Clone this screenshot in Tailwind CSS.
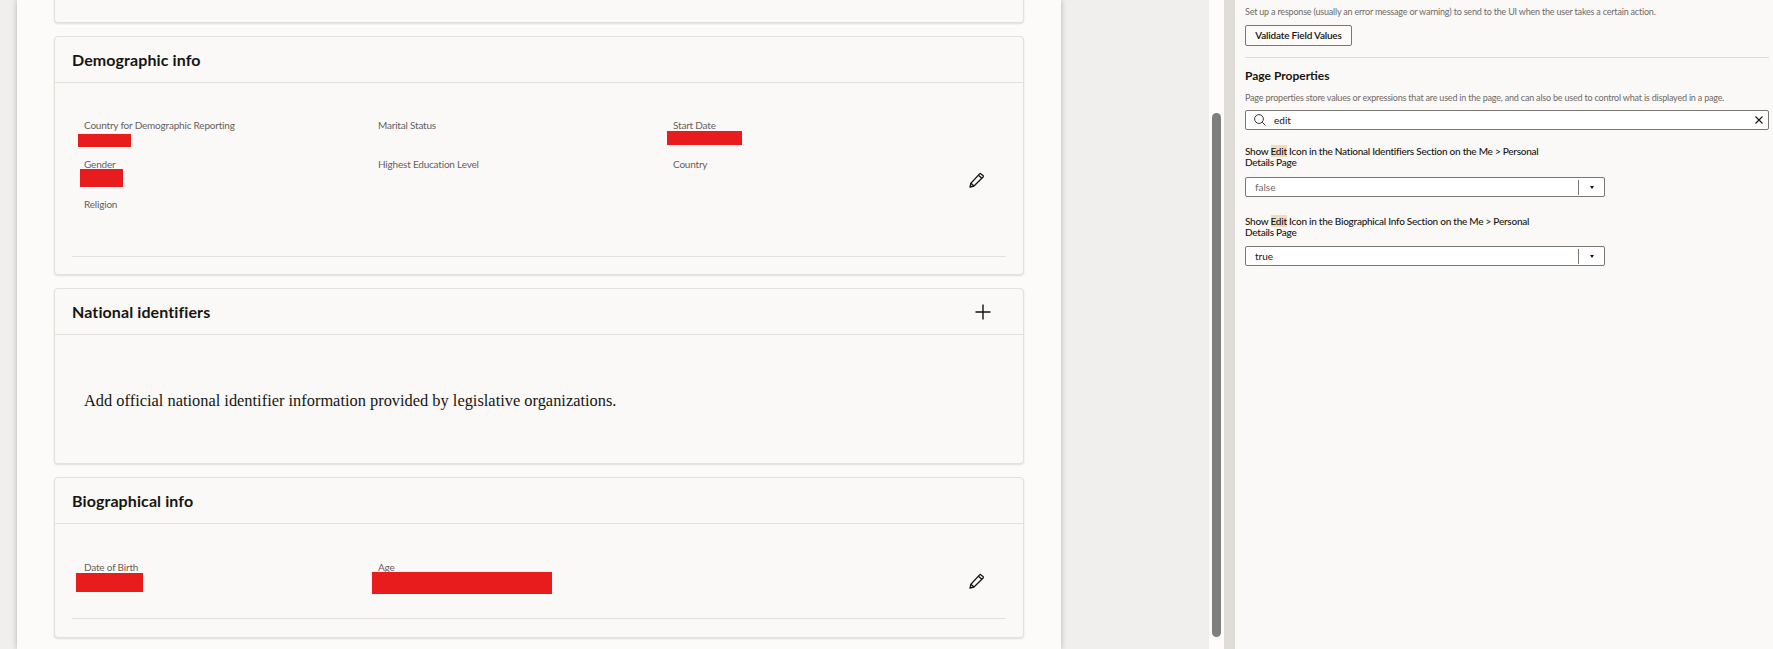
<!DOCTYPE html>
<html lang="en">
<head>
    <meta charset="UTF-8">
    <meta name="viewport" content="width=device-width, initial-scale=1.0">
    <title>Personal Details Page Editor</title>
    <script src="https://cdn.jsdelivr.net/npm/@tailwindcss/browser@4"></script>
</head>
<body class="bg-[#f1efed] h-screen overflow-hidden font-['Lato',sans-serif]">
    <div class="flex h-full">
        <!-- canvas -->
        <div class="w-[1209px] h-full flex shrink-0">
            <main class="ml-[17px] w-[1044px] h-full bg-[#fcfbfa] shadow-[0_0_6px_rgba(0,0,0,0.25)] pl-[37px] pr-[37px] flex flex-col gap-[13px]">
                <div class="h-[23px] shrink-0 bg-[#fbf9f8] border border-t-0 border-[#e4e1dd] rounded-b shadow-[0_1px_2px_rgba(0,0,0,0.12)]"></div>

                <section class="h-[239px] shrink-0 bg-[#fbf9f8] border border-[#e4e1dd] rounded shadow-[0_1px_2px_rgba(0,0,0,0.12)]">
                    <h2 class="h-[46px] pl-[17px] flex items-center border-b border-[#e4e1dd] text-[16px] tracking-[0.1px] font-bold text-[#161513]">Demographic info</h2>
                    <div class="mx-[17px] h-[174px] pt-[35px] border-b border-[#e4e1dd] flex">
                        <div class="ml-[12px] w-[885px] grid grid-cols-[294px_295px_1fr] grid-rows-[39px_40px_14px] text-[10px] tracking-[-0.2px] leading-[14px] text-[#655f5c]">
                            <div class="relative">Country for Demographic Reporting
                                <div class="absolute left-[-6px] top-[16px] w-[53px] h-[13px] bg-[#e81c1c]"></div>
                            </div>
                            <div>Marital Status</div>
                            <div class="relative">Start Date
                                <div class="absolute left-[-6px] top-[13px] w-[75px] h-[14px] bg-[#e81c1c]"></div>
                            </div>
                            <div class="relative">Gender
                                <div class="absolute left-[-4px] top-[12px] w-[43px] h-[18px] bg-[#e81c1c]"></div>
                            </div>
                            <div>Highest Education Level</div>
                            <div>Country</div>
                            <div>Religion</div>
                        </div>
                        <svg class="mt-[54px] w-[16px] h-[16px] shrink-0 text-[#161513]" viewBox="0 0 16 16" fill="none" stroke="currentColor" stroke-width="1.3" stroke-linejoin="round">
                            <path d="M1 15l.9-3.8L10.6 1.9a1 1 0 0 1 1.4 0l2 1.7a1 1 0 0 1 .1 1.4L5 14z"/>
                            <path d="M9.4 3.2l3.5 3M1.9 11.2L5 14"/>
                        </svg>
                    </div>
                </section>

                <section class="h-[176px] shrink-0 bg-[#fbf9f8] border border-[#e4e1dd] rounded shadow-[0_1px_2px_rgba(0,0,0,0.12)]">
                    <div class="h-[46px] pl-[17px] pr-[32px] flex items-center justify-between border-b border-[#e4e1dd]">
                        <h2 class="text-[16px] tracking-[0.1px] font-bold text-[#161513]">National identifiers</h2>
                        <svg class="w-[16px] h-[16px] text-[#161513]" viewBox="0 0 16 16" fill="none" stroke="currentColor" stroke-width="1.4">
                            <path d="M0.5 8h15M8 0.5v15"/>
                        </svg>
                    </div>
                    <p class="pl-[29px] pt-[55px] text-[16.4px] leading-[22px] text-[#161513] font-['Liberation_Serif',serif]">Add official national identifier information provided by legislative organizations.</p>
                </section>

                <section class="h-[161px] shrink-0 bg-[#fbf9f8] border border-[#e4e1dd] rounded shadow-[0_1px_2px_rgba(0,0,0,0.12)]">
                    <h2 class="h-[46px] pl-[17px] flex items-center border-b border-[#e4e1dd] text-[16px] tracking-[0.1px] font-bold text-[#161513]">Biographical info</h2>
                    <div class="mx-[17px] h-[95px] pt-[36px] border-b border-[#e4e1dd] flex">
                        <div class="ml-[12px] w-[885px] grid grid-cols-[294px_1fr] text-[10px] tracking-[-0.2px] leading-[14px] text-[#655f5c]">
                            <div class="relative">Date of Birth
                                <div class="absolute left-[-8px] top-[13px] w-[67px] h-[19px] bg-[#e81c1c]"></div>
                            </div>
                            <div class="relative">Age
                                <div class="absolute left-[-6px] top-[12px] w-[180px] h-[22px] bg-[#e81c1c]"></div>
                            </div>
                        </div>
                        <svg class="mt-[13px] w-[16px] h-[16px] shrink-0 text-[#161513]" viewBox="0 0 16 16" fill="none" stroke="currentColor" stroke-width="1.3" stroke-linejoin="round">
                            <path d="M1 15l.9-3.8L10.6 1.9a1 1 0 0 1 1.4 0l2 1.7a1 1 0 0 1 .1 1.4L5 14z"/>
                            <path d="M9.4 3.2l3.5 3M1.9 11.2L5 14"/>
                        </svg>
                    </div>
                </section>
            </main>
        </div>

        <!-- panel scrollbar -->
        <div class="w-[15px] shrink-0 h-full bg-[#fdfcfb] pt-[113px] pl-[3px]">
            <div class="w-[9px] h-[524px] rounded-full bg-[#7f7f7d]"></div>
        </div>
        <div class="w-[11px] shrink-0 h-full bg-[#e0ddd9]"></div>

        <!-- properties panel -->
        <aside class="flex-1 min-w-0 h-full bg-[#faf9f7] pl-[10px] pr-[4px]">
            <p class="pt-[5px] text-[9px] tracking-[-0.2px] leading-[14px] text-[#6f6a66]">Set up a response (usually an error message or warning) to send to the UI when the user takes a certain action.</p>
            <button class="mt-[6px] h-[21px] w-[107px] bg-[#fcfbfa] border border-[#7a7672] rounded-[2px] text-[10px] tracking-[-0.2px] font-semibold text-[#161513]">Validate Field Values</button>
            <div class="mt-[11px] border-t border-[#e0ddd9]"></div>
            <h3 class="mt-[10px] text-[12px] leading-[16px] font-bold text-[#161513]">Page Properties</h3>
            <p class="mt-[7px] text-[9px] tracking-[-0.2px] leading-[14px] text-[#6f6a66]">Page properties store values or expressions that are used in the page, and can also be used to control what is displayed in a page.</p>
            <div class="mt-[5px] h-[20px] bg-white border border-[#7a7672] rounded-[2px] flex items-center pl-[8px] pr-[5px]">
                <svg class="w-[12px] h-[12px] shrink-0 text-[#3b3835]" viewBox="0 0 12 12" fill="none" stroke="currentColor" stroke-width="1">
                    <circle cx="5" cy="5" r="4.4"/>
                    <path d="M8.2 8.2l3.3 3.3"/>
                </svg>
                <span class="ml-[8px] flex-1 text-[10px] text-[#161513]">edit</span>
                <svg class="w-[8px] h-[8px] shrink-0 text-[#161513]" viewBox="0 0 8 8" fill="none" stroke="currentColor" stroke-width="1.1">
                    <path d="M0.5 0.5l7 7M7.5 0.5l-7 7"/>
                </svg>
            </div>

            <div class="mt-[16px] w-[300px] text-[10px] tracking-[-0.25px] leading-[11px] font-medium text-[#161513]">Show <mark class="bg-[#f8d9b8] text-[#161513]">Edit</mark> Icon in the National Identifiers Section on the Me &gt; Personal Details Page</div>
            <div class="mt-[9px] w-[360px] h-[20px] bg-white border border-[#7a7672] rounded-[2px] flex items-center pl-[9px]">
                <span class="flex-1 text-[10px] text-[#6f6a66]">false</span>
                <span class="w-[1px] h-[15px] bg-[#7a7672]"></span>
                <span class="w-[25px] flex justify-center"><span class="w-0 h-0 border-x-[2.5px] border-x-transparent border-t-[3px] border-t-[#161513]"></span></span>
            </div>

            <div class="mt-[19px] w-[300px] text-[10px] tracking-[-0.25px] leading-[11px] font-medium text-[#161513]">Show <mark class="bg-[#f8d9b8] text-[#161513]">Edit</mark> Icon in the Biographical Info Section on the Me &gt; Personal Details Page</div>
            <div class="mt-[8px] w-[360px] h-[20px] bg-white border border-[#7a7672] rounded-[2px] flex items-center pl-[9px]">
                <span class="flex-1 text-[10px] text-[#161513]">true</span>
                <span class="w-[1px] h-[15px] bg-[#7a7672]"></span>
                <span class="w-[25px] flex justify-center"><span class="w-0 h-0 border-x-[2.5px] border-x-transparent border-t-[3px] border-t-[#161513]"></span></span>
            </div>
        </aside>
    </div>
</body>
</html>
